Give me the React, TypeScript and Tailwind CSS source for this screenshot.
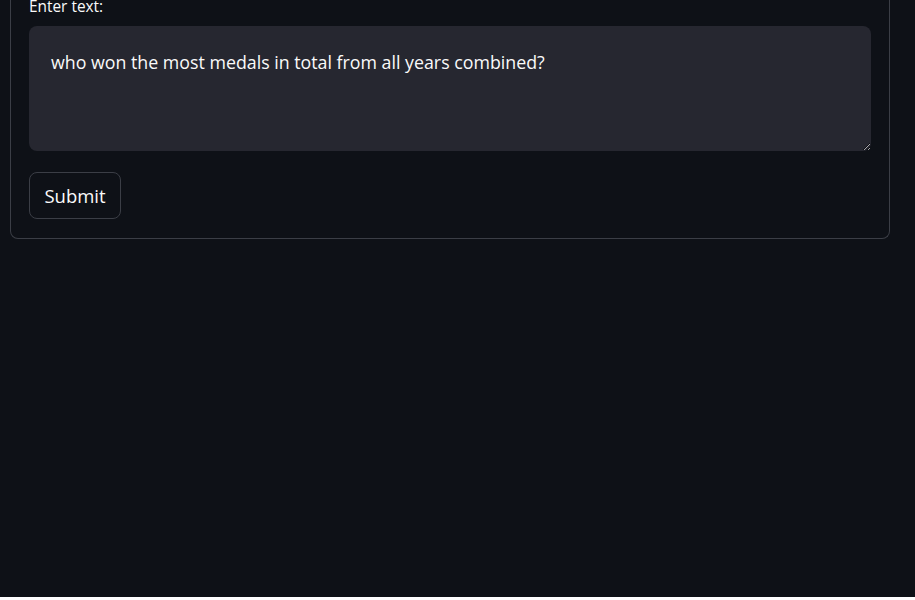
export default function App() {
  return (
    <div className="min-h-screen bg-[#0e1117] pl-[10px] font-['Open_Sans',sans-serif] text-[#fafafa]">
      <div className="w-[880px] rounded-b-lg border-x border-b border-[#3b3e46] px-[18px] pb-[19px]">
        <label className="-mt-[3px] block text-[15.4px] leading-[20px]">Enter text:</label>
        <textarea
          className="mt-[9px] block h-[125px] w-full resize-y rounded-lg bg-[#262730] px-[22px] pt-[22px] pb-[20px] text-[17.8px] leading-[28px] text-[#fafafa] outline-none [color-scheme:dark]"
          defaultValue="who won the most medals in total from all years combined?"
        />
        <button
          type="button"
          className="mt-[21px] flex h-[47px] w-[92px] items-center justify-center rounded-lg border border-[#3b3e46] bg-[#0e1117] text-[18.5px]"
        >
          Submit
        </button>
      </div>
    </div>
  );
}
